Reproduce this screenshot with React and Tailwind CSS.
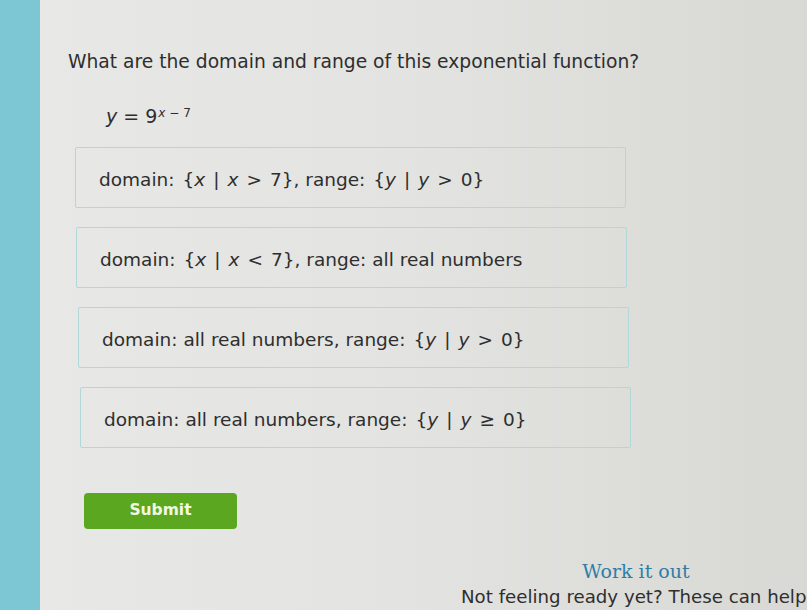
export default function App() {
  const sans = { fontFamily: '"DejaVu Sans", Verdana, sans-serif' };
  const V = ({ children }) => <span className="italic">{children}</span>;
  const S = () => <span className="inline-block w-[8px]" />;
  const Box = ({ children, ml }) => (
    <div
      className="h-[61px] w-[551px] border border-[#b0d8d8] rounded-[2px] flex items-center pl-[23px] pt-[4px] text-[18.5px] text-[#2e2e2e] whitespace-nowrap"
      style={{ marginLeft: ml }}
    >
      {children}
    </div>
  );
  return (
    <div
      className="w-[807px] h-[610px] overflow-hidden flex bg-linear-to-r from-[#e8e8e6] via-[#e3e3e1] to-[#d8d8d4]"
      style={sans}
    >
      <div className="w-[40px] shrink-0 bg-[#7dc7d4]" />
      <div className="flex flex-col flex-1">
        <div className="pt-[49px] pl-[28px] text-[18.7px] leading-[26px] text-[#2e2e2e] whitespace-nowrap">
          What are the domain and range of this exponential function?
        </div>
        <div className="mt-[28px] ml-[66px] text-[19px] leading-[26px] text-[#2e2e2e]">
          <V>y</V> = 9
          <sup className="text-[12px] relative -top-[6px] ml-[1px]">
            <V>x</V> − 7
          </sup>
        </div>
        <div className="mt-[18px] flex flex-col gap-[19px]">
          <Box ml={35}>
            domain:<S />{"{"}<V>x</V><S />|<S /><V>x</V><S />&gt;<S />7{"}"}, range:<S />{"{"}<V>y</V><S />|<S /><V>y</V><S />&gt;<S />0{"}"}
          </Box>
          <Box ml={36}>
            domain:<S />{"{"}<V>x</V><S />|<S /><V>x</V><S />&lt;<S />7{"}"}, range: all real numbers
          </Box>
          <Box ml={38}>
            domain: all real numbers, range:<S />{"{"}<V>y</V><S />|<S /><V>y</V><S />&gt;<S />0{"}"}
          </Box>
          <Box ml={40}>
            domain: all real numbers, range:<S />{"{"}<V>y</V><S />|<S /><V>y</V><S />≥<S />0{"}"}
          </Box>
        </div>
        <button className="mt-[45px] ml-[44px] w-[153px] h-[37px] rounded-[4px] bg-[#5ba71f] text-[#f2f7e2] font-bold text-[15.5px] flex items-center justify-center">
          Submit
        </button>
        <div
          className="mt-[29px] ml-[421px] w-[350px] text-center text-[19px] leading-[26px] text-[#2f7ea6]"
          style={{ fontFamily: '"DejaVu Serif", Georgia, serif' }}
        >
          Work it out
        </div>
        <div className="ml-[421px] text-[18.2px] leading-[26px] text-[#2e2e2e] whitespace-nowrap">
          Not feeling ready yet? These can help
        </div>
      </div>
    </div>
  );
}
